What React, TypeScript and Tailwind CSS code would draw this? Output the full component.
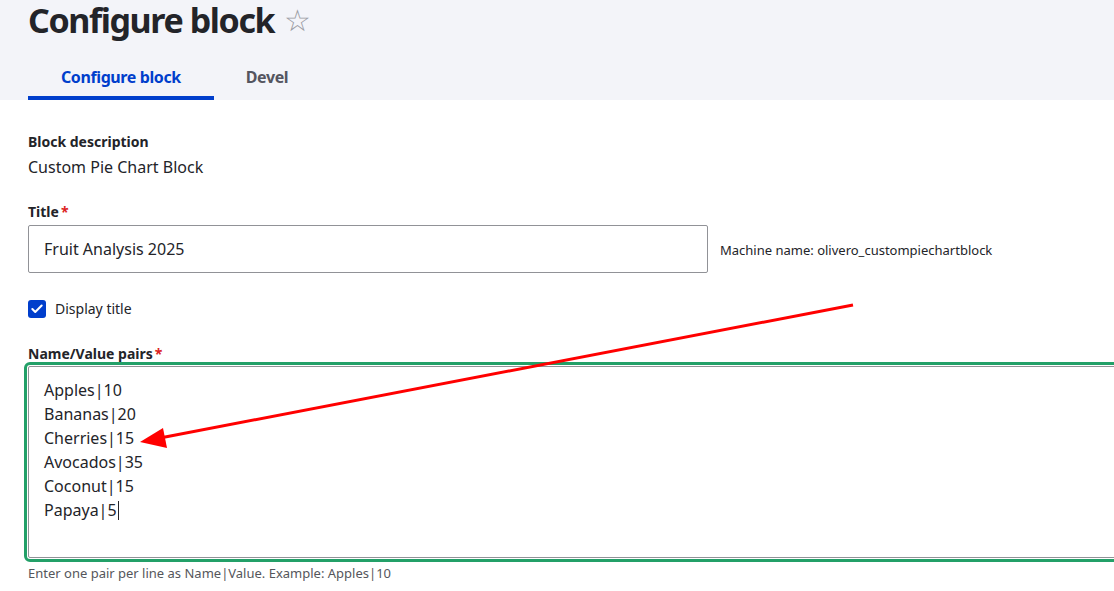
import { Check } from "lucide-react";

const pairs = ["Apples|10", "Bananas|20", "Cherries|15", "Avocados|35", "Coconut|15", "Papaya|5"];

function RedArrow() {
  return (
    <svg
      className="pointer-events-none absolute left-0 top-0"
      width={1114}
      height={591}
      viewBox="0 0 1114 591"
    >
      <line x1={853} y1={305} x2={160} y2={438} stroke="#ff0000" strokeWidth={3} />
      <polygon points="140,442 163,428 167,448" fill="#ff0000" />
    </svg>
  );
}

export default function App() {
  return (
    <div
      className="relative h-[591px] w-[1114px] overflow-hidden bg-white text-[#232429]"
      style={{ fontFamily: '"Noto Sans", "Open Sans", sans-serif' }}
    >
      <header className="h-[100px] bg-[#f3f4f9] pl-[28px]">
        <div className="flex h-[40px] items-center gap-[10px]">
          <h1 className="text-[34px] font-bold leading-[40px] tracking-[-1.4px] text-[#232429]">
            Configure block
          </h1>
          <span className="text-[30px] leading-none text-[#9a9ba3]">☆</span>
        </div>
        <nav className="mt-[17px] flex">
          <div className="flex h-[43px] items-center border-b-[4px] border-[#003ecc] px-[33px] text-[16px] font-bold tracking-[-0.4px] text-[#003ecc]">
            Configure block
          </div>
          <div className="flex h-[43px] items-center px-[32px] pb-[4px] text-[16px] font-bold tracking-[-0.4px] text-[#545560]">
            Devel
          </div>
        </nav>
      </header>

      <main className="pl-[28px] pt-[32px]">
        <div className="text-[14px] font-bold leading-[20px]">Block description</div>
        <div className="mt-[3px] text-[16px] leading-[24px]">Custom Pie Chart Block</div>

        <div className="mt-[23px] flex items-center text-[14px] font-bold leading-[20px]">
          Title<span className="ml-[2px] text-[#dc2323]">*</span>
        </div>
        <div className="mt-[3px] flex items-center">
          <div className="flex h-[48px] w-[680px] items-center rounded-[2px] border border-[#919297] px-[15px] text-[16px]">
            Fruit Analysis 2025
          </div>
          <span className="ml-[12px] mt-[3px] text-[13px]">Machine name: olivero_custompiechartblock</span>
        </div>

        <label className="mt-[25px] flex items-center gap-[9px]">
          <span className="flex h-[18px] w-[18px] items-center justify-center rounded-[3px] bg-[#003ecc]">
            <Check className="h-[14px] w-[14px] text-white" strokeWidth={3.5} />
          </span>
          <span className="text-[14px]">Display title</span>
        </label>

        <div className="mt-[25px] flex items-center text-[14px] font-bold leading-[20px]">
          Name/Value pairs<span className="ml-[2px] text-[#dc2323]">*</span>
        </div>
        <div className="mt-[2px] h-[192px] w-[1100px] rounded-[2px] border border-[#919297] px-[15px] pt-[11px] text-[16px] leading-[24px] outline-[3px] outline-offset-[1px] outline-[#23a068] outline-solid">
          {pairs.map((p, i) => (
            <div key={p} className="flex items-center">
              {p}
              {i === pairs.length - 1 && (
                <span className="ml-[1px] inline-block h-[19px] w-px bg-[#232429]" />
              )}
            </div>
          ))}
        </div>
        <div className="mt-[5px] text-[13px] leading-[20px] text-[#55565b]">
          Enter one pair per line as Name|Value. Example: Apples|10
        </div>
      </main>

      <RedArrow />
    </div>
  );
}
